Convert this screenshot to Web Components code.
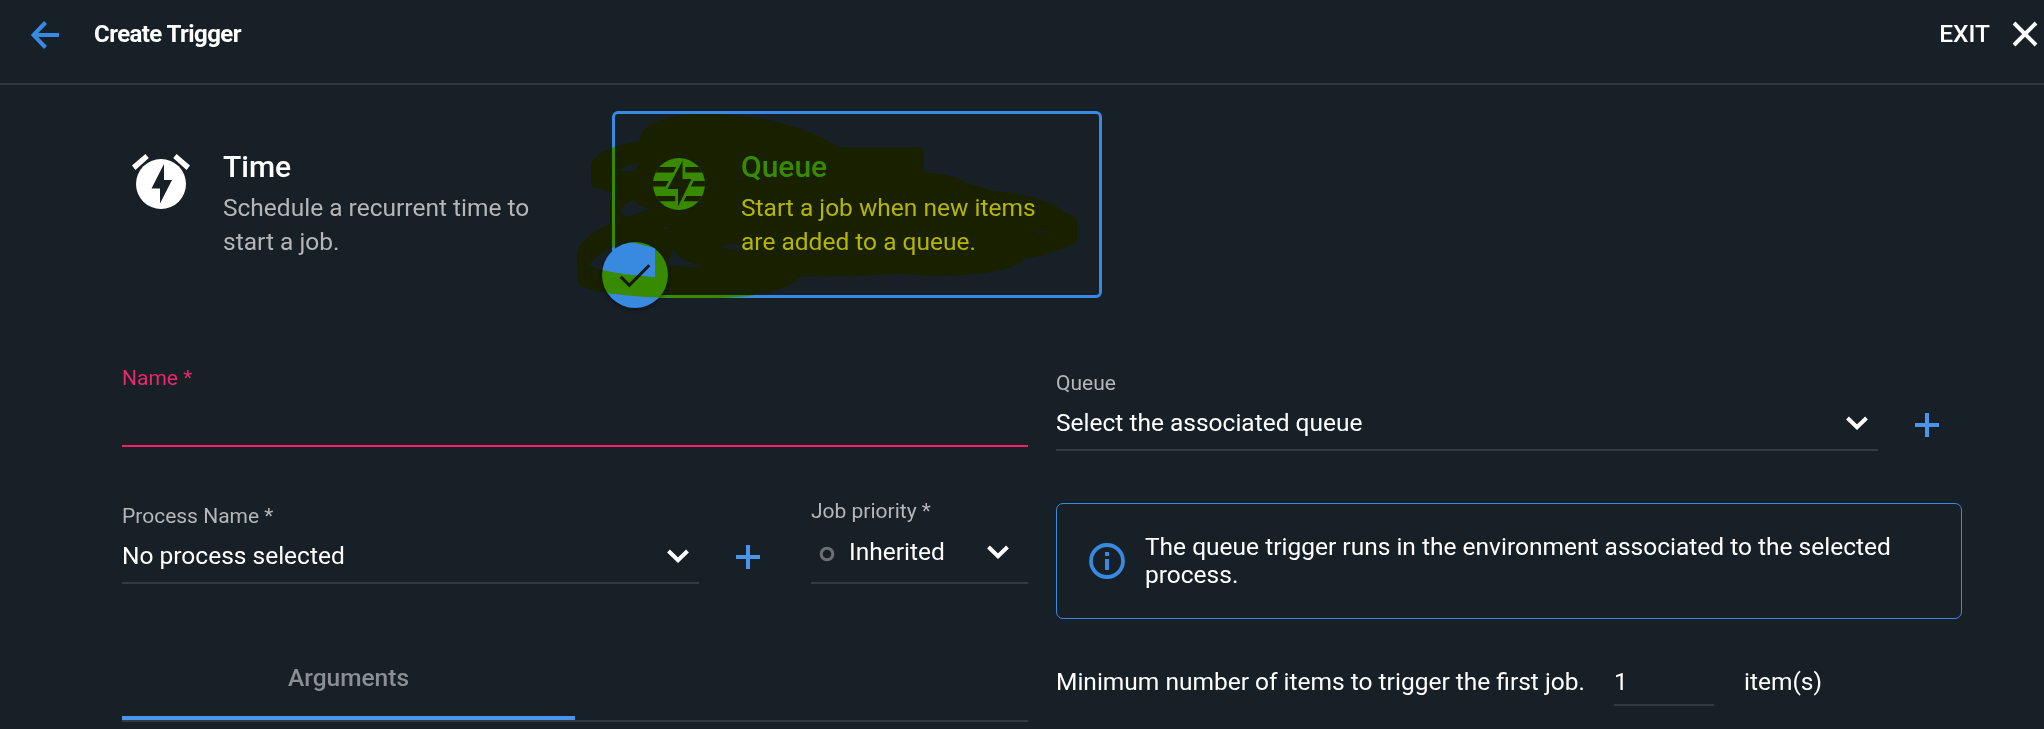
<!DOCTYPE html>
<html lang="en">
<head>
<meta charset="utf-8">
<title>Create Trigger</title>
<style>
  html, body {
    margin: 0;
    height: 100%;
    overflow: hidden;
    background: #182027;
  }
  body {
    --bg: #182027;
    --line: #333a42;
    --accent: #388ae1;
    --accent-light: #4a94ec;
    --muted: #b4b6b8;
    --error: #ff1f66;
    color: #fff;
    font: 400 24.5px/32px Roboto, "Liberation Sans", sans-serif;
  }
</style>
</head>
<body>
<trigger-page></trigger-page>

<script>
class BaseElement extends HTMLElement {
  constructor() {
    super()
    this.attachShadow({ mode: 'open' })
  }

  connectedCallback() {
    this.shadowRoot.innerHTML = this.render()
  }
}

const ICONS = {
  back: [28, 28, '<path d="M28 14H3M14.5 1.5 2.5 14l12 12.5" fill="none" stroke="currentColor" stroke-width="4"/>'],
  close: [26, 26, '<path d="M2 2l22 22M24 2 2 24" fill="none" stroke="currentColor" stroke-width="4"/>'],
  chevron: [22, 14, '<path d="M1.5 2 11 11.2 20.5 2" fill="none" stroke="currentColor" stroke-width="4"/>'],
  plus: [26, 26, '<path d="M13 1v24M1 13h24" fill="none" stroke="currentColor" stroke-width="4"/>'],
  ring: [16, 16, '<circle cx="8" cy="8" r="5.8" fill="none" stroke="#6c7074" stroke-width="3"/>'],
  check: [66, 66, '<path d="M18.7 34.7l8.6 8.6 20-20" fill="none" stroke="#14191d" stroke-width="3"/>'],
  info: [36, 36, `
    <circle cx="18" cy="18" r="16" fill="none" stroke="currentColor" stroke-width="3.8"/>
    <path d="M16 9h4v4h-4zM16 16h4v11h-4z" fill="currentColor"/>`],
  time: [58, 56, `
    <circle cx="29" cy="30" r="25" fill="currentColor"/>
    <path d="M0 11.5 13.4 0l3.4 4L3.4 16zM58 11.5 44.6 0l-3.4 4 13.4 12z" fill="currentColor"/>
    <path d="M32 10v16h8L28 49.500V34.500h-8.500z" fill="#182027"/>`],
  queue: [52, 52, `
    <clipPath id="disc"><circle cx="26" cy="26" r="26"/></clipPath>
    <g clip-path="url(#disc)">
      <path d="M0 0h52v52H0z" fill="currentColor"/>
      <path d="M0 9h52v5.500H0zM0 23h52v5.500H0zM0 38h52v5.300H0z" fill="#182027"/>
      <path d="M29.500 3v18h9L25 48.500V31H14.500z" fill="#182027" stroke="currentColor" stroke-width="5.500" paint-order="stroke"/>
    </g>`],
}

customElements.define('ui-icon', class extends BaseElement {
  render() {
    const [w, h, body] = ICONS[this.getAttribute('name')]
    return `
      <style>
        :host { display: block; flex: none; }
        svg { display: block; }
      </style>
      <svg width="${w}" height="${h}" viewBox="0 0 ${w} ${h}">${body}</svg>
    `
  }
})

customElements.define('page-header', class extends BaseElement {
  render() {
    return `
      <style>
        :host {
          display: flex;
          align-items: center;
          height: 68px;
          padding: 0 6px 15px 31px;
          border-bottom: 2px solid #30383f;
        }
        .back { color: var(--accent); margin-top: 2px; }
        .title { margin-left: 35px; font-weight: 700; font-size: 24px; letter-spacing: -0.57px; }
        .exit { margin-left: auto; font-weight: 500; }
        .close { margin-left: 22px; }
      </style>
      <ui-icon class="back" name="back"></ui-icon>
      <span class="title"><slot></slot></span>
      <span class="exit">EXIT</span>
      <ui-icon class="close" name="close"></ui-icon>
    `
  }
})

customElements.define('trigger-card', class extends BaseElement {
  render() {
    const selected = this.hasAttribute('selected')
    return `
      <style>
        :host {
          position: relative;
          display: flex;
          box-sizing: border-box;
          width: 490px;
          height: 187px;
          padding: 35px 0 0 37px;
          border: 3px solid transparent;
          border-radius: 6px;
        }
        :host([selected]) { border-color: var(--accent); }
        .icon {
          display: flex;
          justify-content: center;
          width: 58px;
          margin: 5px 33px 0 -2px;
        }
        :host([selected]) .icon { margin-top: 9px; color: var(--accent); }
        .title { font-size: 30px; line-height: 36px; font-weight: 500; }
        :host([selected]) .title { color: var(--accent); }
        .text { width: 340px; margin-top: 6px; line-height: 34px; color: var(--muted); }
        .badge {
          position: absolute;
          left: -13px;
          bottom: -13px;
          border-radius: 50%;
          background: var(--accent);
          box-shadow: 0 2px 4px rgba(0, 0, 0, 0.4);
        }
      </style>
      <div class="icon"><ui-icon name="${this.getAttribute('icon')}"></ui-icon></div>
      <div>
        <div class="title">${this.getAttribute('heading')}</div>
        <div class="text"><slot></slot></div>
      </div>
      ${selected ? '<ui-icon class="badge" name="check"></ui-icon>' : ''}
    `
  }
})

// Freehand marker stroke laid over the selected card
customElements.define('marker-highlight', class extends BaseElement {
  render() {
    return `
      <style>
        :host {
          position: absolute;
          left: 570px;
          top: 105px;
          mix-blend-mode: multiply;
          pointer-events: none;
        }
        svg { display: block; }
      </style>
      <svg width="520" height="200" viewBox="570 105 520 200">
        <path fill="#ff0" fill-rule="evenodd" d="
          M639.600 141C640 124 666 114 703 114C765 114 808 128 839 147H916Q924 147 924 151V170Q925 173 930 173
          Q957 175 965 182L992 191C1020 192 1054 200 1063.600 212.500Q1071 214 1077 218V242
          Q1050 256 1025 258.500C1018 270 980 276 935 276L898 274L856 276L801 277
          C786 291 757 298 711 298H678Q645 298 614 294Q577 290 577 279V255
          C578 240 598 228 610 224V200L612.500 192L594 188Q591 187 591 185V165
          C592 154 613 145 639.600 141Z
          M617 171L627 166L639 163L635 171Z
          M620 211L625 205L634 199L638 205L650 209L626 217Z
          M589 265Q600 252 614 247L630 242L655 248V277Q624 275 602 270Z
          M673.500 250Q681 263 703 265.500Q687 269 667 264Z
          M719 247L733 244H740V251Z
          M662 229L666 227L670 227L666 229Z
          M1037.500 231H1048L1038.500 233.500Z"/>
      </svg>
    `
  }
})

customElements.define('form-field', class extends BaseElement {
  render() {
    const value = this.getAttribute('value')
    return `
      <style>
        :host {
          display: flex;
          flex-direction: column;
          box-sizing: border-box;
          height: 80px;
          border-bottom: 2px solid var(--line);
        }
        :host([invalid]) { height: 81px; border-color: var(--error); }
        :host([compact]) { height: 85px; }
        .label { font-size: 21px; line-height: 24px; color: var(--muted); }
        :host([invalid]) .label { color: #e8276c; }
        .control {
          display: flex;
          align-items: center;
          height: 32px;
          margin-top: 12px;
          padding-right: 10px;
        }
        :host([compact]) .control { margin-top: 13px; padding: 0 19px 0 8px; }
        .ring { margin: 4px 14px 0 0; }
        .chevron { margin-left: auto; }
      </style>
      <div class="label"><slot></slot></div>
      ${value ? `
        <div class="control">
          ${this.hasAttribute('ring') ? '<ui-icon class="ring" name="ring"></ui-icon>' : ''}
          <span>${value}</span>
          <ui-icon class="chevron" name="chevron"></ui-icon>
        </div>` : ''}
    `
  }
})

customElements.define('info-box', class extends BaseElement {
  render() {
    return `
      <style>
        :host {
          display: flex;
          align-items: center;
          box-sizing: border-box;
          height: 116px;
          padding: 0 50px 0 32px;
          border: 1px solid var(--accent);
          border-radius: 7px;
        }
        ui-icon { color: var(--accent); margin-right: 20px; }
        .text { line-height: 28px; }
      </style>
      <ui-icon name="info"></ui-icon>
      <div class="text"><slot></slot></div>
    `
  }
})

customElements.define('tab-strip', class extends BaseElement {
  render() {
    return `
      <style>
        :host { display: block; border-bottom: 2px solid var(--line); }
        .tab {
          width: 453px;
          height: 76px;
          line-height: 76px;
          text-align: center;
          font-weight: 500;
          color: #8b8f93;
          border-bottom: 4px solid var(--accent-light);
        }
      </style>
      <div class="tab"><slot></slot></div>
    `
  }
})

customElements.define('item-threshold', class extends BaseElement {
  render() {
    return `
      <style>
        :host { display: flex; height: 40px; }
        .amount {
          box-sizing: border-box;
          width: 100px;
          margin: 0 30px 0 auto;
          border-bottom: 2px solid var(--line);
        }
        .text { width: 528px; white-space: nowrap; }
        .unit { width: 218px; }
      </style>
      <span class="text"><slot></slot></span>
      <span class="amount">${this.getAttribute('value')}</span>
      <span class="unit">item(s)</span>
    `
  }
})

customElements.define('trigger-page', class extends BaseElement {
  render() {
    return `
      <style>
        :host { display: block; position: relative; width: 2044px; height: 729px; overflow: hidden; background: var(--bg); }
        .cards { display: flex; gap: 28px; padding: 26px 0 0 94px; }
        .form {
          display: grid;
          grid-template-columns: 906px 906px;
          gap: 28px;
          padding: 68px 0 0 122px;
        }
        .row { display: flex; align-items: flex-end; }
        .plus { color: var(--accent-light); }
        .left .row { margin-top: 52px; }
        .left .plus { margin: 0 50px 14px 36px; }
        .process { width: 577px; }
        .priority { width: 217px; }
        tab-strip { margin-top: 56px; }
        .right .row { margin-top: 5px; }
        .right .plus { margin: 0 0 13px 36px; }
        .queue { width: 822px; }
        info-box { margin-top: 52px; }
        item-threshold { margin-top: 47px; }
      </style>
      <page-header>Create Trigger</page-header>
      <div class="cards">
        <trigger-card icon="time" heading="Time">Schedule a recurrent time to<br>start a job.</trigger-card>
        <trigger-card icon="queue" heading="Queue" selected>Start a job when new items<br>are added to a queue.</trigger-card>
      </div>
      <div class="form">
        <div class="left">
          <form-field invalid>Name *</form-field>
          <div class="row">
            <form-field class="process" value="No process selected">Process Name *</form-field>
            <ui-icon class="plus" name="plus"></ui-icon>
            <form-field class="priority" value="Inherited" ring compact>Job priority *</form-field>
          </div>
          <tab-strip>Arguments</tab-strip>
        </div>
        <div class="right">
          <div class="row">
            <form-field class="queue" value="Select the associated queue">Queue</form-field>
            <ui-icon class="plus" name="plus"></ui-icon>
          </div>
          <info-box>The queue trigger runs in the environment associated to the selected process.</info-box>
          <item-threshold value="1">Minimum number of items to trigger the first job.</item-threshold>
        </div>
      </div>
      <marker-highlight></marker-highlight>
    `
  }
})
</script>
</body>
</html>
